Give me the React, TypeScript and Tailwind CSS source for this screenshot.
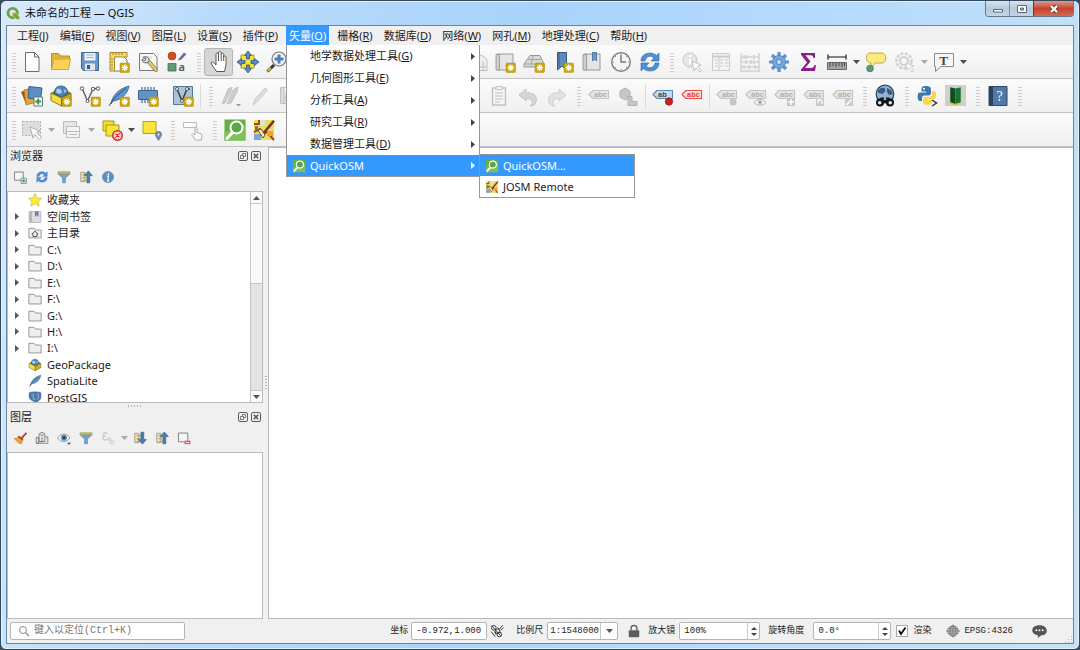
import React from 'react';

const Badge = () => (
  <g>
    <rect x="13" y="13" width="9.5" height="9.5" rx="1" fill="#c9a415" stroke="#b5920f" strokeWidth=".5" />
    <path d="M17.7 14.4v6.600M14.600 17.700h6.400M15.500 15.500l4.500 4.500M20 15.500l-4.500 4.500" stroke="#fff" strokeWidth="1.2" />
  </g>
);

const Tag = ({ fill = '#e6e6e3', stroke = '#c4c4c0', color = '#b0b0ac', text = 'abc' }) => (
  <g>
    <path d="M2 10.500 6 6.500h15.500v8H6z" fill={fill} stroke={stroke} strokeWidth="1.1" strokeLinejoin="round" />
    <text x="7" y="13" fontSize="7.500" fontWeight="700" fill={color} fontFamily="Liberation Sans, sans-serif">{text}</text>
  </g>
);

const Cycle = () => (
  <g fill="#4f8fd3" stroke="#2f68ab" strokeWidth=".6" strokeLinejoin="round">
    <path d="M3 11C3 6 7 3 12 3c3 0 5 1 6.500 2.500L21 3v8h-8l3-3c-3-3-8-2-9 3z" />
    <path d="M21 13c0 5-4 8-9 8-3 0-5-1-6.500-2.500L3 21v-8h8l-3 3c3 3 8 2 9-3z" />
  </g>
);

const Book = () => (
  <g>
    <path d="M4 4h16v16H4z" fill="#e4e4e4" stroke="#9a9a9a" />
    <path d="M3 4.500h3.500V20H3z" fill="#cfcfcf" stroke="#8f8f8f" strokeWidth=".8" />
  </g>
);

const Filter = () => (
  <g stroke="#5f86ab" strokeWidth="1" strokeLinejoin="round">
    <path d="M2 4h20v3l-7.500 6.500V22h-5v-8.500L2 7z" fill="#74a0cc" />
    <path d="M2 3h20v3.500H2z" fill="#c4bd66" stroke="#a19b52" />
  </g>
);

const Box3 = () => (
  <g>
    <path d="M2 9l10-6 10 6-9 5z" fill="#8a7719" />
    <path d="M2 9l10.500 5v8L2 16.500z" fill="#f0df3c" stroke="#6b5a10" strokeWidth=".8" />
    <path d="M22 9l-9.500 5v8L22 16.500z" fill="#c7ae23" stroke="#6b5a10" strokeWidth=".8" />
    <path d="M5.500 9.500C5 5 8 2 12 2s7 3 6.500 7.500L12.500 13z" fill="#4c83bd" stroke="#2b527d" strokeWidth=".8" />
    <path d="M8 4.500l4 1 1 3-3 1.500-3-2zM15 5l2.500 2-2 2z" fill="#b6d0e8" />
  </g>
);

const Feather = () => (
  <g>
    <path d="M4 20C5 12 11 5 22 2c-1 7-7 14-16 15z" fill="#5e97cf" stroke="#3b6899" strokeWidth=".9" />
    <path d="M2 22C6 15 12 9 19 4.500" fill="none" stroke="#2c4f78" strokeWidth="1" />
  </g>
);

const TreeArrow = ({ up = false }) => (
  <g>
    <path d="M3 4h7v16H3z" fill="#ece4c4" stroke="#8b8b83" strokeWidth="1.300" />
    <path d="M6 8h8M6 13h6M6 18h8" stroke="#d0a929" strokeWidth="2" />
    <path d={up ? 'M16 1.500l7 8h-4.500V22h-5V9.500H9z' : 'M16 22.500l7-8h-4.500V2h-5v12.500H9z'} fill="#4b7fb3" stroke="#31597f" />
  </g>
);

const Folder = () => (
  <path d="M1.500 20.500V4h9l2 3h10v13.500z" fill="#efefef" stroke="#8c8c8c" strokeWidth="1.500" strokeLinejoin="round" />
);

const Pointer = () => (
  <path d="M14.500 22l-4-5.500 1-1 2.500 1.500V9.500c1-1 2 0 2 1v4l4 1.200 1 2.500-.8 4z" fill="#fafafa" stroke="#ababab" />
);

const art: Record<string, React.ReactNode> = {
  newProject: <path d="M5.500 2.500h9L19 7v14.500H5.500zM14.500 2.500V7H19" fill="#fdfdfd" stroke="#6c6c6c" />,
  open: (
    <g>
      <path d="M2.500 19.500v-16h7l2 2.500h9v3.500" fill="#e3b134" stroke="#b88f27" />
      <path d="M2.500 19.500L5 9h16.500l-2 10.500z" fill="#fbd157" stroke="#d5a63b" strokeLinejoin="round" />
    </g>
  ),
  save: (
    <g>
      <path d="M3.500 2.500h17v18h-15l-2-2z" fill="#6796c5" stroke="#41668c" strokeLinejoin="round" />
      <path d="M6.500 3h11v7.500h-11z" fill="#f3f5f8" />
      <path d="M8 5h8M8 7.500h8" stroke="#a5adb5" />
      <path d="M7 13.500h10v7H7z" fill="#dce4ec" />
      <path d="M9 15h3v4H9z" fill="#3b5f85" />
    </g>
  ),
  layout: (
    <g>
      <path d="M7 6h9l4 4v11H7z" fill="#fff" stroke="#777" />
      <path d="M3 2.500h17v4.500H7.500V21H3z" fill="#f6d96f" stroke="#a58a33" />
      <path d="M6 3v2M9 3v2M12 3v2M15 3v2M4 9h2M4 12h2M4 15h2M4 18h2" stroke="#8a7229" strokeWidth=".8" />
      <Badge />
    </g>
  ),
  manager: (
    <g>
      <path d="M3.500 3.500h14L21 7v13.500H3.500z" fill="#f7f7f7" stroke="#777" />
      <path d="M6 6h10v3H6z" fill="#e4e4e4" />
      <path d="M13 12l7 8" stroke="#8d7b33" strokeWidth="4" strokeLinecap="round" />
      <path d="M13 12l7 8" stroke="#e3cd7a" strokeWidth="2.400" strokeLinecap="round" />
      <path d="M7 7.500c3-2 7 0 6 4l-2 1c-3 1-5-1-5-3l3 1 1-2z" fill="#e2e2e2" stroke="#555" strokeWidth=".9" />
    </g>
  ),
  style: (
    <g>
      <circle cx="7" cy="6" r="4" fill="#cf4d22" stroke="#9d3514" strokeWidth=".6" />
      <path d="M13.500 9l5.500-6.500 2.500 1.500-5 5.500-3.500 1z" fill="#6170a8" />
      <path d="M3 13.500h8v7.500H3z" fill="#5f9b77" stroke="#3f7355" strokeWidth=".8" />
      <text x="13.500" y="20.500" fontSize="11" fontWeight="600" fill="#555" fontFamily="Noto Sans, sans-serif">a</text>
    </g>
  ),
  hand: (
    <path
      d="M9.500 21.500c-1-2-3-4-5-7.500-1.200-2 1-3 2.500-1.200L9 15V4.500c0-2 2.500-2 2.500 0V3c0-2 2.700-2 2.700 0v1.500c0-1.700 2.500-1.700 2.500.2V7c0-1.500 2.300-1.500 2.300.3 0 5 .3 6.700-.5 9.700l-1 4.500zM11.500 4.500V11M14.200 4.500V11M16.700 6.500V11"
      fill="#fff" stroke="#555" strokeWidth="1" strokeLinejoin="round"
    />
  ),
  pan: (
    <g>
      <path d="M5 5h13v13H5z" fill="#f3e43c" stroke="#aa9a20" />
      <path d="M12 1l3.500 4.500h-2V9h-3V5.500h-2zM12 23l3.500-4.500h-2V15h-3v3.500h-2zM1 12l4.500-3.500v2H9v3H5.500v2zM23 12l-4.500-3.500v2H15v3h3.500v2z" fill="#5b8cc4" stroke="#2f557f" strokeWidth=".8" />
    </g>
  ),
  zoomIn: (
    <g>
      <path d="M9 15l-6.500 6.500" stroke="#333" strokeWidth="3" />
      <path d="M6 18l-3 3" stroke="#e0b93a" strokeWidth="2" />
      <circle cx="14" cy="9" r="7" fill="#eef4fa" stroke="#777" strokeWidth="1.200" />
      <path d="M14 4.500v9M9.500 9h9" stroke="#4b80b5" strokeWidth="3" />
    </g>
  ),
  mapView: <path d="M4 20.500V9c2-7 15-6 19 1v10.500zM15 17h7M19 11v9" fill="#efefef" stroke="#bdbdbd" />,
  newMap: <g><Book /><Badge /></g>,
  new3d: (
    <g>
      <path d="M2 14L8 5.500h10l4 8.500v3H2z" fill="#d8d8d8" stroke="#979797" />
      <path d="M3 14h18M6 9.500h13M11 6L9 16" stroke="#a8a8a8" />
      <Badge />
    </g>
  ),
  newBookmark: <g><path d="M6.500 2.500h9v18L11 16l-4.500 4z" fill="#5c8cbc" stroke="#37597c" /><path d="M8 3v14" stroke="#395f87" /><Badge /></g>,
  bookmarks: <g><Book /><path d="M12.500 2.500h4V11l-2-2-2 2z" fill="#6a9ac8" stroke="#406a92" strokeWidth=".8" /></g>,
  clock: (
    <g fill="none" stroke="#777">
      <circle cx="12" cy="12" r="9.300" fill="#f5f5f5" strokeWidth="1.300" />
      <path d="M12 5v7h5" strokeWidth="1.400" />
      <path d="M12 3.500v1.500M12 19v1.500M3.500 12H5M19 12h1.500M6 6l1 1M17 17l1 1M6 18l1-1M17 7l1-1" strokeWidth=".8" />
    </g>
  ),
  refresh: <Cycle />,
  identify: (
    <g>
      <circle cx="10" cy="10" r="7" fill="#e6e6e6" stroke="#c9c9c9" />
      <path d="M10 5v2M10 9v5" stroke="#fff" strokeWidth="2" />
      <path d="M12 11l9 4-3.500 1.500 4 4-1.500 1.500-4-4L14 21z" fill="#fafafa" stroke="#c2c2c2" />
    </g>
  ),
  table: (
    <g fill="none" stroke="#cbcbcb">
      <path d="M3.500 3.500h17v17h-17z" fill="#f3f3f3" />
      <path d="M3.500 6.500h17" strokeWidth="2" />
      <path d="M6 10h3M11 10h3M16 10h3M6 13h3M11 13h3M16 13h3M6 16h3M11 16h3M16 16h3M10 7v13" />
    </g>
  ),
  abacus: (
    <g fill="none" stroke="#c2c2c2">
      <path d="M3 3v18M21 3v18M3 7h18M3 12h18M3 17h18M2 21h20" />
      <path d="M6 5v4M9 5v4M16 5v4M8 10v4M13 10v4M16 10v4M6 15v4M11 15v4M17 15v4" strokeWidth="2" stroke="#d5d5d5" />
    </g>
  ),
  gear: (
    <g>
      <path d="M12 2v20M2 12h20M5 5l14 14M19 5L5 19" stroke="#5b93cf" strokeWidth="3.200" />
      <circle cx="12" cy="12" r="6.500" fill="#76a8dc" stroke="#4b82bf" strokeWidth=".8" />
      <circle cx="12" cy="12" r="2.600" fill="#c4daf1" stroke="#3f76b3" strokeWidth=".8" />
    </g>
  ),
  sum: <path d="M5 3h14v5h-1.500c-.5-2-1-2.700-3-2.700H9.500l5 6.200L9 18h6c2 0 2.800-.8 3.500-3H20l-1 6H5v-1.500l6-7L5 4.700z" fill="#8a1f8c" />,
  measure: (
    <g>
      <path d="M3 7h18" stroke="#444" strokeWidth="1.300" />
      <path d="M3 4.500v5M21 4.500v5" stroke="#444" strokeWidth="1.500" />
      <path d="M2.500 12.500h19v7h-19z" fill="#a5a5a5" stroke="#666" />
      <path d="M5 13v4M8 13v3M11 13v4M14 13v3M17 13v4M19.500 13v3" stroke="#444" />
    </g>
  ),
  tips: (
    <g>
      <path d="M6 3h12c5 0 5 10 0 10h-7l-4 6v-6C1 13 1 3 6 3z" fill="#faea80" stroke="#c2a844" />
      <circle cx="6" cy="18.500" r="3.300" fill="#5c9a76" stroke="#3f7355" strokeWidth=".8" />
    </g>
  ),
  action: (
    <g fill="none" stroke="#cfcfcf">
      <circle cx="11" cy="11" r="7.500" strokeWidth="2.500" strokeDasharray="3 1.500" />
      <circle cx="11" cy="11" r="4" strokeWidth="2" />
      <path d="M13 13l8 3-3 1 3 4-2 1-3-4-2 2z" fill="#f8f8f8" />
    </g>
  ),
  text: (
    <g>
      <path d="M2.500 3.500h19v13H9l-5.500 5v-5h-1z" fill="#f7f7f7" stroke="#8b8b8b" />
      <text x="7.300" y="14.500" fontSize="13" fontWeight="700" fill="#444" fontFamily="Liberation Serif, serif">T</text>
    </g>
  ),
  sources: (
    <g>
      <path d="M1 8l9-4 5 13-9 3z" fill="#9a5b1f" />
      <path d="M4 6l10-2 3 14-11 3z" fill="#e2a632" stroke="#a0701f" strokeWidth=".7" />
      <path d="M9 2.500l13 1.500-1.500 12L8 14z" fill="#5e8ec1" stroke="#365f8c" />
      <path d="M14 13h8.500v9H14z" fill="#fff" stroke="#4d8569" />
      <path d="M18.200 14.500v6M15.200 17.500h6" stroke="#4d8569" strokeWidth="2" />
    </g>
  ),
  geopackage: <g><Box3 /><Badge /></g>,
  shapefile: (
    <g>
      <path d="M4 4l5.500 13L15 5l5 -1" fill="none" stroke="#555" strokeWidth="1.300" />
      <g fill="#fff" stroke="#555"><circle cx="4" cy="4.500" r="1.700" /><circle cx="9.500" cy="17" r="1.500" /><circle cx="15" cy="5" r="1.700" /><circle cx="20" cy="4.500" r="1.700" /></g>
      <Badge />
    </g>
  ),
  spatialite: <g><Feather /><Badge /></g>,
  memory: (
    <g>
      <path d="M6 3v16M9 3v16M12 3v16M15 3v16M18 3v16" stroke="#4a76a3" strokeWidth="1.300" />
      <path d="M2.500 6.500h19v9h-19z" fill="#5f93c8" stroke="#3b658f" />
      <Badge />
    </g>
  ),
  virtual: (
    <g>
      <path d="M2.500 2.500h19v18h-19z" fill="#a9c3dc" stroke="#54789c" />
      <path d="M6 5l5 12 5-12h3" fill="none" stroke="#444" strokeWidth="1.600" />
      <g fill="#fff" stroke="#444" strokeWidth=".8"><circle cx="6" cy="5" r="1.500" /><circle cx="11" cy="17" r="1.500" /><circle cx="16" cy="5" r="1.500" /></g>
      <Badge />
    </g>
  ),
  pencils: (
    <g fill="#cdcdcd" stroke="#c2c2c2" strokeLinejoin="round">
      <path d="M3 20L9 5l4-2-1 4-6 12zM8 20l6-14 5-3-1 5-6 11z" />
      <path d="M17 20h5l-2.500 2.500z" fill="#999" stroke="none" />
    </g>
  ),
  pencil: <path d="M5 21l2-6L17 4l2.500 2L10 17z" fill="#dedede" stroke="#cacaca" strokeLinejoin="round" />,
  saveEdits: <path d="M3.500 3.500h18v16h-18zM7 4v6h10V4M7 19v-6h10" fill="#dcdcdc" stroke="#c2c2c2" />,
  paste: (
    <g fill="#f4f4f4" stroke="#c2c2c2">
      <path d="M5.500 4h13v17h-13z" strokeWidth="1.400" />
      <path d="M9 2.500h6v3H9zM8 9h8M8 12h8M8 15h8M8 18h5" />
    </g>
  ),
  undo: <path d="M3 11l7-6v4c8-1 13 4 9 11-1 1.500-3 2-5 2 4-3 3-8-4-7.500V17z" fill="#d6d6d6" stroke="#c4c4c4" strokeLinejoin="round" />,
  redo: <path d="M21 11l-7-6v4C6 8 1 13 5 20c1 1.500 3 2 5 2-4-3-3-8 4-7.500V17z" fill="#e2e2e2" stroke="#cdcdcd" strokeLinejoin="round" />,
  tag: <Tag />,
  diagram: (
    <g fill="#c6c6c3" stroke="#b2b2ae">
      <path d="M4 7l5-3 5 3v6l-5 3-5-3z" />
      <path d="M12 21.500v-9h4v5h5v4z" />
    </g>
  ),
  pinLabels: (
    <g><Tag fill="#c5dbf0" stroke="#5b89b8" color="#444" text="ab" /><circle cx="18" cy="17.500" r="3.700" fill="#c8211f" stroke="#8d1514" strokeWidth=".7" /></g>
  ),
  redTag: <Tag fill="#fde3e0" stroke="#ee4b44" color="#e03a35" />,
  tagPin: <g><Tag /><circle cx="18" cy="18" r="3.500" fill="#c4c4c4" /></g>,
  tagEye: <g><Tag /><path d="M10 18.500c3-4 9-4 12 0-3 3.500-9 3.500-12 0z" fill="#f3f3f3" stroke="#b4b4b4" /><circle cx="16" cy="18.300" r="1.800" fill="#a5a5a5" /></g>,
  tagMove: <g><Tag /><path d="M14 14h8v8h-8z" fill="#c6c6c6" /><path d="M18 15v6M15 18h6" stroke="#fff" strokeWidth="1.500" /></g>,
  tagRotate: <g><Tag /><path d="M14 14h8v8h-8z" fill="#cacaca" /><path d="M20 20c1-3-1-5-4-4v3" fill="none" stroke="#fff" strokeWidth="1.400" /></g>,
  tagEdit: <g><Tag /><path d="M14 14h8v8h-8z" fill="#cacaca" /><path d="M15.500 21l5-5.500" stroke="#fff" strokeWidth="1.800" /></g>,
  metasearch: (
    <g>
      <circle cx="12" cy="10" r="8.800" fill="#8fb1d2" stroke="#27415c" strokeWidth="1.200" />
      <path d="M4.500 7c2-3 5-4 7-3l1 3-3 3-4-1zM14 4l4 2 2 4-4 1-2-3z" fill="#36597d" />
      <path d="M8 13.500h3v2h2v-2h3l2 2h-12z" fill="#141414" />
      <circle cx="7" cy="18.500" r="4" fill="#141414" /><circle cx="17" cy="18.500" r="4" fill="#141414" />
      <path d="M10 16h4v3h-4z" fill="#141414" />
      <circle cx="6.700" cy="18.800" r="1.800" fill="#d9e5ef" /><circle cx="17.300" cy="18.800" r="1.800" fill="#d9e5ef" />
    </g>
  ),
  python: (
    <g>
      <path d="M11 2c-4 0-4.500 1.500-4.500 4v1.500H11v1H4.500C2 8.500 2 17 5 17h2v-3c0-2 1-2.500 3-2.500h3.500c1.500 0 2.500-1 2.500-2.500V5c0-2-2-3-5-3z" fill="#3a78ad" />
      <path d="M17 7v3c0 2-1 3-3 3h-3.500C9 13 8 14 8 15.500V18c0 2 2 3 4.500 3S17 20 17 18v-2h-4.500v-1H19c3-.5 3-8 0-8z" fill="#f9d548" />
      <circle cx="9" cy="4.800" r="1" fill="#fff" />
      <path d="M17 16l4.500 3-4.500 3" fill="none" stroke="#333" strokeWidth="1.500" />
    </g>
  ),
  greenBook: (
    <g>
      <path d="M6 2.500L12 4v18l-6-2z" fill="#0f4d20" />
      <path d="M12 4l6-1.500V20l-6 2z" fill="#187332" />
      <path d="M4 20l8 2.500 7-2.500" fill="none" stroke="#d8c62c" strokeWidth="1.500" />
    </g>
  ),
  help: (
    <g>
      <path d="M3 2.500h18v19H3z" fill="#5079a8" stroke="#2c4768" />
      <path d="M3 2.500h4v19H3z" fill="#2f4158" />
      <text x="10.500" y="17" fontSize="14" fill="#fff" fontFamily="Liberation Serif, serif">?</text>
    </g>
  ),
  select: (
    <g>
      <path d="M2.500 3.500h18v14h-18z" fill="#dedede" stroke="#aaa" strokeDasharray="2 1.500" />
      <path d="M10 9l10 4-3.500 1.500 5 5-2 2-5-5L13 20z" fill="#fafafa" stroke="#aaa" strokeWidth=".9" />
    </g>
  ),
  selectForm: (
    <g fill="#e6e6e6" stroke="#bbb">
      <path d="M3.500 3.500h13v12h-13z" /><path d="M6.500 8.500h13v5h-13zM6.500 13.500h13v6h-13z" fill="#f4f4f4" /><path d="M9 16.500h8" />
    </g>
  ),
  deselect: (
    <g>
      <path d="M3 3h11v10H3z" fill="#f6e02f" stroke="#a4931b" /><path d="M6 7h13v11H6z" fill="#f9e536" stroke="#a4931b" />
      <circle cx="17.500" cy="17.500" r="4.800" fill="#f2c9c8" stroke="#d4312f" strokeWidth="1.500" />
      <path d="M14.500 20.500l6-6M15.500 16.500h3.500M16.500 18.500h3" stroke="#d4312f" />
    </g>
  ),
  selectLocation: (
    <g>
      <path d="M4 3.500h13v12H4z" fill="#fbe53a" stroke="#b09e26" />
      <path d="M19.500 22.500c-2-3.500-3-4.500-3-6a3 3 0 016 0c0 1.500-1 2.500-3 6z" fill="#6d91a8" stroke="#44657a" strokeWidth=".7" />
      <circle cx="19.500" cy="16.500" r="1" fill="#fff" />
    </g>
  ),
  trace: <g><path d="M2.500 4.500h13v5h-13z" fill="#fbfbfb" stroke="#bababa" /><Pointer /></g>,
  osm: (
    <g>
      <path d="M1.500 1.500h21v21h-21z" fill="#64b044" />
      <path d="M1.500 22.500v-8l21-8v16z" fill="#7fc05a" />
      <path d="M9.500 14.500L4 20.500" stroke="#fff" strokeWidth="3" strokeLinecap="round" />
      <circle cx="13.500" cy="9.500" r="6" fill="#5aa546" stroke="#fff" strokeWidth="2" />
    </g>
  ),
  josm: (
    <g>
      <path d="M2 2h20v20H2z" fill="#eddc5c" />
      <path d="M2 6h5V2M2 14l6-3 3 5 4-2 7 8" fill="none" stroke="#b33c25" strokeWidth="2" />
      <path d="M8 2h5v6H8z" fill="#d8e8d0" /><path d="M2 16h7v6H2z" fill="#79a8d8" /><path d="M3 8h3v4H3z" fill="#5b8c44" /><path d="M15 13h6v5h-6z" fill="#e8a23c" />
      <path d="M10 15L21 2l2 1.500L12.500 16l-4 2z" fill="#7a3318" />
      <path d="M6 12l5 8 2-3-4-6z" fill="#fff1b8" stroke="#49351a" strokeWidth=".8" />
    </g>
  ),
  addLayer: (
    <g><path d="M2.500 3.500h15v14h-15z" fill="#f5f5f5" stroke="#777" strokeWidth="1.500" /><path d="M14 14h9v9h-9z" fill="#eef5ef" stroke="#56886b" strokeWidth="1.300" /><path d="M18.500 15.500v6M15.500 18.500h6" stroke="#56886b" strokeWidth="2" /></g>
  ),
  removeLayer: (
    <g><path d="M2.500 3.500h16v15h-16z" fill="#f5f5f5" stroke="#777" strokeWidth="1.500" /><path d="M13 16.500h10v6H13z" fill="#e5585a" /><path d="M15 19.500h6" stroke="#fff" strokeWidth="1.500" /></g>
  ),
  filter: <Filter />,
  collapse: <TreeArrow up />,
  expand: <TreeArrow />,
  info: (
    <g><circle cx="12" cy="12" r="9.500" fill="#5a8fca" stroke="#7f96af" strokeWidth="1.500" /><path d="M12.800 5.500v3M10 10.500h3l-1.500 8h2.500" fill="none" stroke="#fff" strokeWidth="2" /></g>
  ),
  brush: (
    <g><path d="M23 3l-9 10" stroke="#b5392c" strokeWidth="3" /><path d="M2 13l6-1 2-3 7 6-3 7-5-2z" fill="#e3aa3a" stroke="#a87522" /><path d="M9 9l8 6" stroke="#c63f2c" strokeWidth="3" /></g>
  ),
  group: (
    <g fill="#e8e8e8" stroke="#777" strokeWidth="1.500"><path d="M7 18V5l5-3 5 3v13z" /><path d="M2 11h4v10H2zM2 21h20M12 10v10M9 7h6M18 10h4v11" /></g>
  ),
  eye: (
    <g><path d="M1 12c5-9 17-9 21 0-5 8-16 8-21 0z" fill="#f2f4f6" stroke="#7a8794" strokeWidth="1.300" /><circle cx="12" cy="11.500" r="5" fill="#5685b2" /><circle cx="12" cy="11.500" r="2" fill="#1e2d3b" /><path d="M17 20h7l-3.500 3.500z" fill="#444" /></g>
  ),
  epsilon: (
    <g fill="none" stroke="#c2c2c2" strokeWidth="1.800"><path d="M11 5C7 1 2 5 5 8c1 1 3 1 3 1s-5 0-5 3 5 5 8 2" /><path d="M12 12h4v4h-4zM16 17h6v5h-6z" strokeWidth="1.300" /></g>
  ),
  star: <path d="M12 1l3.200 7.500 8 .7-6 5.300 1.800 8-7-4.200-7 4.200 1.800-8-6-5.300 8-.7z" fill="#fbec3c" stroke="#c9b63a" strokeWidth="1.200" />,
  bookmarkBook: <g><path d="M2 2.500h20v19H2z" fill="#dedede" stroke="#999" /><path d="M2 2.500h5v19H2z" fill="#b9b9b9" /><path d="M12 2.500h6V12l-3-3-3 3z" fill="#7577b8" /></g>,
  home: <g><Folder /><path d="M6.500 14L12 9l5.500 5M8.500 13v5h7v-5" fill="none" stroke="#555" strokeWidth="1.700" /></g>,
  folder: <Folder />,
  box: <Box3 />,
  feather: <Feather />,
  postgis: (
    <g><path d="M2 3c4-2 16-2 20 0v8c-1 5-4 6-6 6v5h-5l-1-5c-4 0-7-3-8-7z" fill="#4a7bad" stroke="#2f567e" /><path d="M9 4v9c0 2 3 2 4 0M16 4c3 3 2 9 0 11M6 7h1M18 7h1" fill="none" stroke="#a9c6e2" strokeWidth="1.300" /></g>
  ),
  tracking: (
    <g fill="none" stroke="#3c3c3c" strokeWidth="1.700">
      <circle cx="6.500" cy="6.500" r="4" /><circle cx="13" cy="12.500" r="4" /><circle cx="16" cy="18" r="4" />
      <path d="M2 13l7 9M3 3l15 17M13 6l3 3 6-7M18 11l5-5M8 13l2 5" />
    </g>
  ),
  lock: <g><path d="M7 11V7c0-6 10-6 10 0v4" fill="none" stroke="#686868" strokeWidth="2.500" /><rect x="3" y="10.500" width="18" height="12" rx="2" fill="#5d5d5d" /></g>,
  globe: (
    <g fill="none" stroke="#7b7b7b" strokeWidth="1.600"><circle cx="12" cy="12" r="9" fill="#c4c4c4" /><path d="M0 12h24M12 1v22M3 8h18M3 16h18" /><ellipse cx="12" cy="12" rx="4.500" ry="9" /></g>
  ),
  bubble: <g fill="#555"><path d="M12 2c15 0 15 16 3 16l-6 4.500.5-4.500C-3 17-3 2 12 2z" /><g fill="#fff"><circle cx="7" cy="10" r="1.500" /><circle cx="12" cy="10" r="1.500" /><circle cx="17" cy="10" r="1.500" /></g></g>,
  search: <g fill="none" stroke="#8a8a8a" strokeWidth="2"><circle cx="10" cy="10" r="7" /><path d="M15 15l7 7" strokeWidth="2.500" /></g>,
  qgis: (
    <g>
      <circle cx="11.500" cy="12" r="8" fill="none" stroke="#6fa53a" strokeWidth="5" />
      <path d="M11.500 11.500h5l7 7.500v4h-5l-7-7z" fill="#7f9f35" stroke="#f4f8ee" strokeWidth=".8" />
      <path d="M11.500 11.500h5l-5 5z" fill="#ef8b32" />
    </g>
  ),
};

function Icon({ name, className = 'size-6' }: { name: string; className?: string }) {
  return <svg viewBox="0 0 24 24" aria-hidden="true" className={`${className} shrink-0`}>{art[name]}</svg>;
}

function Tool({ name, pressed = false }: { name: string; pressed?: boolean }) {
  return (
    <button type="button" aria-label={name} aria-pressed={pressed} className={`flex h-7 w-[29px] shrink-0 items-center justify-center rounded-[3px] border ${pressed ? 'border-[#b4b4b4] bg-[#d6d6d6]' : 'border-transparent'}`}>
      <Icon name={name} />
    </button>
  );
}

function Tools({ names }: { names: string[] }) {
  return <>{names.map((n) => <Tool key={n} name={n} />)}</>;
}

function Handle({ className = 'w-[13px]' }: { className?: string }) {
  return (
    <span className={`${className} flex shrink-0 justify-center pl-[3px]`}>
      <span className="h-5 w-1 bg-[radial-gradient(circle,#cccccc_0.8px,transparent_1px)] bg-[size:2px_3px]" />
    </span>
  );
}

function Sep() {
  return <span className="flex w-1.5 shrink-0 justify-center"><span className="h-6 w-px bg-[#dadada]" /></span>;
}

function Drop({ dim = false, className = 'w-[10px]' }: { dim?: boolean; className?: string }) {
  return (
    <button type="button" aria-label="more" className={`${className} flex h-7 shrink-0 items-center justify-center`}>
      <svg viewBox="0 0 7 4" className={`h-1 w-[7px] ${dim ? 'fill-[#a8a8a8]' : 'fill-[#4c4c4c]'}`}><path d="M0 0h7L3.500 4z" /></svg>
    </button>
  );
}

const rowClass = 'flex h-[34px] items-center overflow-hidden border-b border-[#c3c3c3] bg-gradient-to-b from-[#fbfbfb] to-[#f0f0f0]';

function Toolbars() {
  return (
    <div>
      <div className={rowClass}>
        <Handle className="w-[10px]" />
        <Tools names={['newProject', 'open', 'save', 'layout', 'manager', 'style']} />
        <Handle />
        <Tool name="hand" pressed />
        <Tools names={['pan', 'zoomIn']} />
        <span className="w-[170px] shrink-0" />
        <Tools names={['mapView', 'newMap', 'new3d', 'newBookmark', 'bookmarks', 'clock', 'refresh']} />
        <Handle />
        <Tools names={['identify', 'table', 'abacus', 'gear', 'sum', 'measure']} />
        <Drop />
        <Tools names={['tips', 'action']} />
        <Drop dim />
        <Tool name="text" />
        <Drop />
      </div>
      <div className={rowClass}>
        <Handle className="w-[10px]" />
        <Tools names={['sources', 'geopackage', 'shapefile', 'spatialite', 'memory']} />
        <span className="w-1.5 shrink-0" />
        <Tool name="virtual" />
        <Sep />
        <Handle />
        <Tools names={['pencils', 'pencil', 'saveEdits']} />
        <span className="w-[181px] shrink-0" />
        <Tools names={['paste', 'undo', 'redo']} />
        <Handle />
        <Tools names={['tag', 'diagram']} />
        <Sep />
        <Tools names={['pinLabels', 'redTag']} />
        <Sep />
        <Tools names={['tagPin', 'tagEye', 'tagMove', 'tagRotate', 'tagEdit']} />
        <Handle />
        <Tool name="metasearch" />
        <Handle />
        <Tool name="python" />
        <button type="button" aria-label="manual" aria-pressed="true" className="mx-1 flex shrink-0 bg-[#cfcfcb]"><Icon name="greenBook" className="size-[21px]" /></button>
        <Handle />
        <Tool name="help" />
        <Handle />
      </div>
      <div className={rowClass}>
        <Handle className="w-[10px]" />
        <Tool name="select" />
        <Drop dim className="w-[11px]" />
        <Tool name="selectForm" />
        <Drop dim className="w-[11px]" />
        <Tool name="deselect" />
        <Drop />
        <Tool name="selectLocation" />
        <Handle />
        <Tool name="trace" />
        <Handle />
        <Tools names={['osm', 'josm']} />
      </div>
    </div>
  );
}

const Label = ({ text, k }: { text: string; k: string }) => <span className="whitespace-nowrap">{text}(<u>{k}</u>)</span>;

const menus = [
  ['工程', 'J'], ['编辑', 'E'], ['视图', 'V'], ['图层', 'L'], ['设置', 'S'], ['插件', 'P'], ['矢量', 'O'],
  ['栅格', 'R'], ['数据库', 'D'], ['网络', 'W'], ['网孔', 'M'], ['地理处理', 'C'], ['帮助', 'H'],
];
const vectorItems = [['地学数据处理工具', 'G'], ['几何图形工具', 'E'], ['分析工具', 'A'], ['研究工具', 'R'], ['数据管理工具', 'D']];

function RightArrow({ className }: { className: string }) {
  return <svg viewBox="0 0 4 7" className={`h-[7px] w-1 ${className}`}><path d="M0 0v7l4-3.500z" /></svg>;
}

function VectorMenu() {
  return (
    <div role="menu" className="absolute top-full left-0 z-10 w-[194px] border border-t-0 border-[#979797] bg-white text-[#1a1a1a]">
      {vectorItems.map(([t, k]) => (
        <button key={k} type="button" role="menuitem" className="flex h-[22px] w-full items-center justify-between pr-1 pl-[23px]">
          <Label text={t} k={k} />
          <RightArrow className="fill-[#444]" />
        </button>
      ))}
      <div className="relative">
        <button type="button" role="menuitem" className="flex h-[21px] w-full items-center gap-1 bg-[#3399ff] pr-1 pl-[5px] text-white">
          <Icon name="osm" className="size-[14px]" />
          <span>QuickOSM</span>
          <RightArrow className="ml-auto fill-white" />
        </button>
        <div role="menu" className="absolute -top-px left-full w-[156px] border border-[#979797] bg-white text-[#1a1a1a]">
          <button type="button" role="menuitem" className="flex h-[21px] w-full items-center gap-1 bg-[#3399ff] pl-[5px] text-white">
            <Icon name="osm" className="size-[14px]" />QuickOSM...
          </button>
          <button type="button" role="menuitem" className="flex h-[21px] w-full items-center gap-1 pl-[5px]">
            <Icon name="josm" className="size-[14px]" />JOSM Remote
          </button>
        </div>
      </div>
    </div>
  );
}

function MenuBar() {
  return (
    <nav className="flex h-[19px] gap-[5px] bg-[#f0f0f0] pl-[7px]">
      {menus.map(([t, k]) => {
        const open = k === 'O';
        return (
          <div key={k} className="relative flex">
            <button type="button" aria-expanded={open} className={`px-[3px] ${open ? 'bg-[#3399ff] text-white' : ''}`}><Label text={t} k={k} /></button>
            {open && <VectorMenu />}
          </div>
        );
      })}
    </nav>
  );
}

function PanelTitle({ title }: { title: string }) {
  return (
    <header className="flex h-[18px] shrink-0 items-center gap-[3px] pr-0.5 pl-[3px]">
      <h2 className="mr-auto">{title}</h2>
      <button type="button" aria-label="float">
        <svg viewBox="0 0 10 10" className="size-[10px]" fill="none" stroke="#5c5c5c"><rect x=".5" y=".5" width="9" height="9" rx="1.500" /><path d="M2.500 4.500h3v3h-3zM4.500 4V2.500h3v3H6" strokeWidth=".8" /></svg>
      </button>
      <button type="button" aria-label="close">
        <svg viewBox="0 0 10 10" className="size-[10px]" fill="none" stroke="#5c5c5c"><rect x=".5" y=".5" width="9" height="9" rx="1.500" /><path d="M2.800 2.800l4.400 4.400M7.200 2.800L2.800 7.200" strokeWidth="1.600" /></svg>
      </button>
    </header>
  );
}

function SmallTool({ name }: { name: string }) {
  return <button type="button" aria-label={name} className="flex w-[22px] justify-center"><Icon name={name} className="size-[14px]" /></button>;
}

const tree: [string, string, boolean][] = [
  ['star', '收藏夹', false], ['bookmarkBook', '空间书签', true], ['home', '主目录', true],
  ['folder', 'C:\\', true], ['folder', 'D:\\', true], ['folder', 'E:\\', true], ['folder', 'F:\\', true],
  ['folder', 'G:\\', true], ['folder', 'H:\\', true], ['folder', 'I:\\', true],
  ['box', 'GeoPackage', false], ['feather', 'SpatiaLite', false], ['postgis', 'PostGIS', false],
];

function Browser() {
  return (
    <section>
      <PanelTitle title="浏览器" />
      <div className="flex h-[26px] items-center pb-0.5 pl-0.5">
        {['addLayer', 'refresh', 'filter', 'collapse', 'info'].map((n) => <SmallTool key={n} name={n} />)}
      </div>
      <div className="flex h-[212px] overflow-hidden border border-[#bcbcbc] bg-white">
        <ul className="flex h-[214px] flex-1 flex-col">
          {tree.map(([icon, label, expandable]) => (
            <li key={label} className="flex flex-1 items-center pl-[7px] leading-4">
              <span className="w-[13px]">{expandable && <RightArrow className="fill-[#555]" />}</span>
              <Icon name={icon} className="size-[14px]" />
              <span className="ml-[5px]">{label}</span>
            </li>
          ))}
        </ul>
        <div className="flex w-3 flex-col border-l border-[#c4c4c4] bg-[#e4e4e4]">
          <button type="button" aria-label="up" className="flex h-3 items-center justify-center border-b border-[#c4c4c4] bg-[#fafafa]">
            <svg viewBox="0 0 7 4" className="h-1 w-[7px] fill-[#555]"><path d="M0 4h7L3.500 0z" /></svg>
          </button>
          <div className="h-20 border-b border-[#c4c4c4] bg-[#fafafa]" />
          <button type="button" aria-label="down" className="mt-auto flex h-3 items-center justify-center border-t border-[#c4c4c4] bg-[#fafafa]">
            <svg viewBox="0 0 7 4" className="h-1 w-[7px] fill-[#555]"><path d="M0 0h7L3.500 4z" /></svg>
          </button>
        </div>
      </div>
    </section>
  );
}

function Layers() {
  return (
    <section className="flex flex-1 flex-col">
      <PanelTitle title="图层" />
      <div className="flex h-[26px] items-center pb-0.5 pl-0.5">
        {['brush', 'group', 'eye', 'filter', 'epsilon'].map((n) => <SmallTool key={n} name={n} />)}
        <Drop dim />
        {['expand', 'collapse', 'removeLayer'].map((n) => <SmallTool key={n} name={n} />)}
      </div>
      <div className="flex-1 border border-[#bcbcbc] bg-white" />
    </section>
  );
}

const field = 'h-[18px] rounded-[2px] border border-[#b4b4b4] bg-white';

function Spin({ id, value, className }: { id: string; value: string; className: string }) {
  return (
    <div className={`flex ${field} ${className}`}>
      <input id={id} defaultValue={value} className="min-w-0 flex-1 bg-transparent pl-1 outline-none" />
      <div className="flex w-3 flex-col items-center justify-center gap-[3px] border-l border-[#c9c9c9]">
        <button type="button" aria-label="increase"><svg viewBox="0 0 6 3" className="h-[3px] w-1.5 fill-[#444]"><path d="M0 3h6L3 0z" /></svg></button>
        <button type="button" aria-label="decrease"><svg viewBox="0 0 6 3" className="h-[3px] w-1.5 fill-[#444]"><path d="M0 0h6L3 3z" /></svg></button>
      </div>
    </div>
  );
}

function StatusBar() {
  return (
    <footer className="flex h-6 items-center bg-[#f0f0f0] pl-[3px] font-['Liberation_Mono','Noto_Sans_CJK_SC',monospace] text-[9px] whitespace-nowrap text-[#222] [&_button]:flex">
      <label className={`flex w-[175px] items-center gap-1 pl-[7px] ${field}`}>
        <Icon name="search" className="size-3" />
        <input placeholder="键入以定位(Ctrl+K)" className="min-w-0 flex-1 text-[10px] outline-none placeholder:text-[#777]" />
      </label>
      <label htmlFor="coord" className="mr-[3px] ml-auto">坐标</label>
      <input id="coord" defaultValue="-0.972,1.000" className={`w-[76px] pl-1 ${field}`} />
      <button type="button" aria-label="extents" className="mr-3 ml-[3px]"><Icon name="tracking" className="size-[14px]" /></button>
      <label htmlFor="scale" className="mr-1">比例尺</label>
      <div className={`relative flex w-[71px] ${field}`}>
        <select id="scale" className="w-full appearance-none bg-transparent pl-0.5 outline-none"><option>1:1548000</option></select>
        <span className="pointer-events-none absolute inset-y-0 right-0 flex w-[17px] items-center justify-center border-l border-[#c9c9c9]">
          <svg viewBox="0 0 7 4" className="h-1 w-[7px] fill-[#555]"><path d="M0 0h7L3.500 4z" /></svg>
        </span>
      </div>
      <button type="button" aria-label="lock" className="mr-[7px] ml-[9px]"><Icon name="lock" className="size-[14px]" /></button>
      <label htmlFor="magnifier" className="mr-1">放大镜</label>
      <Spin id="magnifier" value="100%" className="w-[81px]" />
      <label htmlFor="rotation" className="mr-[9px] ml-2">旋转角度</label>
      <Spin id="rotation" value="0.0°" className="w-[78px]" />
      <label className="ml-[5px] flex items-center gap-[5px]">
        <span className="relative flex size-3">
          <input type="checkbox" defaultChecked className="peer size-3 appearance-none border border-[#aaa] bg-white" />
          <svg viewBox="0 0 12 12" className="pointer-events-none absolute inset-0 hidden size-3 peer-checked:block"><path d="M3 5.500L5 9l4.500-6.500" fill="none" stroke="#111" strokeWidth="1.800" /></svg>
        </span>
        渲染
      </label>
      <button type="button" className="ml-[15px] items-center gap-1"><Icon name="globe" className="size-[14px]" />EPSG:4326</button>
      <button type="button" aria-label="messages" className="ml-[19px]"><Icon name="bubble" className="size-[15px]" /></button>
      <span className="mr-px ml-[17px] size-2 self-end bg-[radial-gradient(circle,#b5b5b5_0.8px,transparent_1px)] bg-[size:3px_3px] [clip-path:polygon(100%_0,100%_100%,0_100%)]" />
    </footer>
  );
}

function TitleBar() {
  return (
    <header className="flex h-6 items-start">
      <div className="flex h-full items-center gap-[5px] text-[#111]">
        <Icon name="qgis" className="size-[14px]" />
        <h1>未命名的工程 — QGIS</h1>
      </div>
      <div className="ml-auto flex h-4 overflow-hidden rounded-b border border-t-0 border-[#66788a]">
        <button type="button" aria-label="minimize" className="flex w-6 items-center justify-center border-r border-[#7f92a5] bg-gradient-to-b from-[#d8e5f1] via-[#b7c9da] to-[#c4d6e6]">
          <svg viewBox="0 0 12 12" className="size-3"><path d="M1.500 6.500h9V9h-9z" fill="#fff" stroke="#5a6875" /></svg>
        </button>
        <button type="button" aria-label="maximize" className="flex w-[23px] items-center justify-center bg-gradient-to-b from-[#d8e5f1] via-[#b7c9da] to-[#c4d6e6]">
          <svg viewBox="0 0 12 12" className="size-3"><path d="M1.500 2.500h9v7h-9z" fill="#fff" stroke="#5a6875" /><path d="M4.500 5h3v2h-3z" fill="#a9bccd" stroke="#5a6875" /></svg>
        </button>
        <button type="button" aria-label="close" className="flex w-10 items-center justify-center border-l border-[#7a3229] bg-gradient-to-b from-[#dd9a8c] via-[#c4432c] to-[#d26a52]">
          <svg viewBox="0 0 12 12" className="size-3"><path d="M3 3l6 6M9 3L3 9" stroke="#6a3a36" strokeWidth="4" /><path d="M3 3l6 6M9 3L3 9" stroke="#fff" strokeWidth="2.300" /></svg>
        </button>
      </div>
    </header>
  );
}

export default function App() {
  return (
    <div className="flex h-screen flex-col bg-[#3a4c5c] font-['Noto_Sans','Noto_Sans_CJK_SC',sans-serif] text-[11px] leading-4 text-[#1c1c1c]">
      <div className="flex flex-1 flex-col rounded-md border border-[#33485c] bg-[linear-gradient(100deg,#d9ebfb_0%,#b9dbfa_18%,#a9d3fb_45%,#b9dcfc_75%,#c5e2f6_100%)] px-[5px] pb-[5px] shadow-[inset_0_0_0_1px_#e3f2fc]">
        <TitleBar />
        <div className="flex flex-1 flex-col border border-[#6786a5] bg-[#f0f0f0]">
          <MenuBar />
          <Toolbars />
          <main className="flex flex-1">
            <aside className="flex w-64 flex-col">
              <Browser />
              <div className="flex h-[5px] items-center justify-center"><span className="h-0.5 w-4 bg-[radial-gradient(circle,#b5b5b5_0.8px,transparent_1px)] bg-[size:3px_2px]" /></div>
              <Layers />
            </aside>
            <div className="flex w-[5px] items-center justify-center"><span className="h-4 w-0.5 bg-[radial-gradient(circle,#b5b5b5_0.8px,transparent_1px)] bg-[size:2px_3px]" /></div>
            <div className="flex-1 border border-r-0 border-[#b8b8b8] bg-white" />
          </main>
          <StatusBar />
        </div>
      </div>
    </div>
  );
}
